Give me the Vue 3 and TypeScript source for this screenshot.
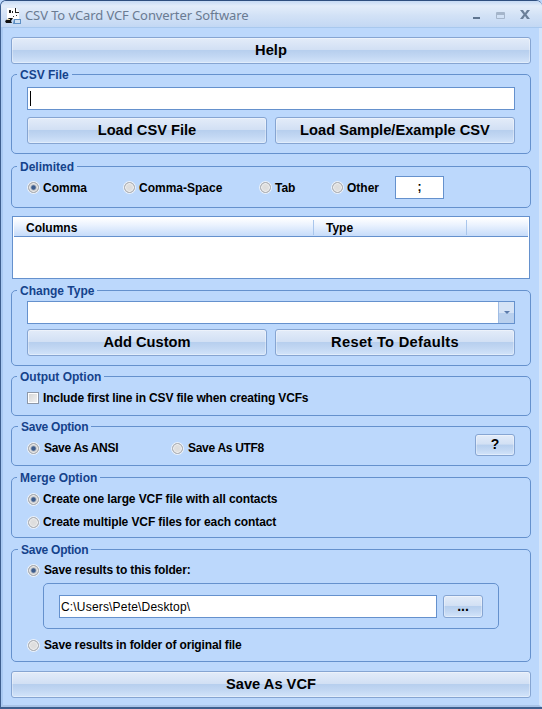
<script setup lang="ts">
const delimiters = [
  { label: 'Comma', on: true, cls: 'd1' },
  { label: 'Comma-Space', on: false, cls: 'd2' },
  { label: 'Tab', on: false, cls: 'd3' },
  { label: 'Other', on: false, cls: 'd4' },
]
</script>

<template>
  <div class="window">
    <header class="titlebar">
      <svg class="appicon" width="17" height="17" viewBox="0 0 17 17">
        <path d="M3 1h8l3 3v8H2V1z" fill="#fff" />
        <path d="M4 3h2v3H4zM7 4h1v2H7zM10 1h1v4h3v1h-4z" fill="#222" />
        <path d="M8 9h1v1H8zM11 8h1v1h-1z" fill="#333" />
        <path d="M0 14l4-3h4l-2 3 1 2H1z" fill="#111" />
        <path d="M2 12h3v1H2z" fill="#e8d9b0" />
        <path d="M9 12h7v5H8z" fill="#5d8fc4" />
        <path d="M10 13h5v3h-5z" fill="#cfe0f2" />
      </svg>
      <span class="title">CSV To vCard VCF Converter Software</span>
      <div class="controls">
        <svg width="58" height="10" viewBox="0 0 58 10">
          <path d="M0 7h7v2H0z" fill="#5f7590" />
          <path d="M23.500 2.500h8v6h-8z" fill="none" stroke="#a5b5ca" />
          <path d="M24 3h7v2h-7z" fill="#a5b5ca" />
          <path d="M47 0h3l2 3 2-3h3l-3.500 4.500 3.500 4.500h-3l-2-3-2 3h-3l3.500-4.500z" fill="#6c8099" />
        </svg>
      </div>
    </header>

    <main class="client">
      <button class="btn wide help">Help</button>

      <section class="group g-csv">
        <span class="legend">CSV File</span>
        <div class="field csvfield"><i class="caret"></i></div>
        <div class="two">
          <button class="btn big">Load CSV File</button>
          <button class="btn big">Load Sample/Example CSV</button>
        </div>
      </section>

      <section class="group g-delim">
        <span class="legend">Delimited</span>
        <div class="row">
          <label v-for="d in delimiters" :key="d.label" class="opt" :class="d.cls">
            <span class="radio" :class="{ on: d.on }"></span>{{ d.label }}
          </label>
          <div class="field semi">;</div>
        </div>
      </section>

      <section class="list">
        <div class="listhead">
          <span class="col c1">Columns</span>
          <span class="col c2">Type</span>
          <span class="col c3"></span>
        </div>
      </section>

      <section class="group g-change">
        <span class="legend">Change Type</span>
        <div class="field combo">
          <span class="arrow"><i></i></span>
        </div>
        <div class="two close">
          <button class="btn big">Add Custom</button>
          <button class="btn big wider">Reset To Defaults</button>
        </div>
      </section>

      <section class="group g-output">
        <span class="legend">Output Option</span>
        <label class="opt tight">
          <span class="check"></span>Include first line in CSV file when creating VCFs
        </label>
      </section>

      <section class="group g-save">
        <span class="legend shift">Save Option</span>
        <div class="row">
          <label class="opt s1 tx44 tighter"><span class="radio on"></span>Save As ANSI</label>
          <label class="opt s2 tx44 tighter"><span class="radio"></span>Save As UTF8</label>
          <button class="btn q">?</button>
        </div>
      </section>

      <section class="group g-merge">
        <span class="legend">Merge Option</span>
        <label class="opt slim"><span class="radio on"></span>Create one large VCF file with all contacts</label>
        <label class="opt slim"><span class="radio"></span>Create multiple VCF files for each contact</label>
      </section>

      <section class="group g-folder">
        <span class="legend shift">Save Option</span>
        <label class="opt tx44 tight"><span class="radio on"></span>Save results to this folder:</label>
        <div class="inner">
          <div class="field path">C:\Users\Pete\Desktop\</div>
          <button class="btn dots">...</button>
        </div>
        <label class="opt tx44 tight"><span class="radio"></span>Save results in folder of original file</label>
      </section>

      <button class="btn wide saveas">Save As VCF</button>
    </main>
  </div>
</template>

<style>
html, body { margin: 0; padding: 0; background: #bcd8fc; }
</style>

<style scoped>
* { box-sizing: border-box; }
.window {
  width: 542px;
  height: 709px;
  display: flex;
  flex-direction: column;
  overflow: hidden;
  background: #bcd8fc;
  border-left: 1px solid #3e5f8f;
  border-bottom: 2px solid #3e5f8f;
  border-top: 1px solid #2f4f7f;
  border-radius: 6px 6px 0 0;
  font: 700 12px "Liberation Sans", Arial, sans-serif;
  color: #000;
}
.titlebar {
  height: 27px;
  flex: none;
  display: flex;
  align-items: center;
  padding-left: 4px;
  background: linear-gradient(#c6daf4 0, #e3edfa 5px, #d3e2f6 14px, #c3d8f4 26px);
  border-bottom: 1px solid #a8c8ee;
}
.appicon { flex: none; margin-top: 2px; }
.title {
  margin-left: 3px;
  margin-top: 2px;
  font: 400 13px "Noto Sans", sans-serif;
  letter-spacing: -0.1px;
  color: #6a7b92;
  white-space: nowrap;
}
.controls { margin-left: auto; margin-right: 11px; align-self: flex-start; margin-top: 9px; height: 10px; }
.controls svg { display: block; }

.client {
  flex: 1;
  display: flex;
  flex-direction: column;
  padding: 9px 8px 0 8px;
  border-left: 2px solid #a9c9f2;
  border-right: 3px solid #d4e5fb;
  border-bottom: 2px solid #a9c4e8;
}

.btn {
  display: block;
  padding: 0 0 2px;
  margin: 0;
  font: 700 14.67px "Liberation Sans", Arial, sans-serif;
  color: #000;
  height: 27px;
  border: 1px solid #86a5d2;
  border-radius: 3px;
  background: linear-gradient(#e3ecf9 0, #d2e0f4 46%, #b7cfee 50%, #c3d8f3 75%, #d3e4fa 100%);
  box-shadow: inset 0 0 0 1px rgba(255, 255, 255, 0.35);
}
.wide { width: 520px; flex: none; }
.big { width: 240px; }
.wider { letter-spacing: 0.3px; }
.two { display: flex; gap: 8px; margin-top: 7px; }
.two.close { margin-top: 5px; }

.group {
  position: relative;
  width: 520px;
  flex: none;
  border: 1px solid #6591cd;
  border-radius: 5px;
  padding: 12px 15px 0;
}
.legend {
  position: absolute;
  top: -7px;
  left: 5px;
  padding: 0 3px;
  background: #bcd8fc;
  color: #15428b;
  line-height: 15px;
  white-space: nowrap;
}
.legend.shift { left: 6px; letter-spacing: -0.25px; }

.g-csv { margin-top: 10px; height: 80px; }
.g-delim { margin-top: 12px; height: 42px; padding-top: 9px; }
.g-change { margin-top: 11px; height: 76px; padding-top: 10px; }
.g-output { margin-top: 10px; height: 40px; padding-top: 14px; }
.g-save { margin-top: 10px; height: 40px; padding-top: 10px; }
.g-merge { margin-top: 11px; height: 61px; padding-top: 14px; display: flex; flex-direction: column; gap: 9px; }
.g-folder { margin-top: 11px; height: 113px; padding-top: 13px; }
.saveas { margin-top: 9px; }

.field {
  background: #fff;
  border: 1px solid #6591cd;
}
.csvfield { height: 23px; width: 488px; display: flex; align-items: center; padding-left: 2px; }
.caret { width: 1px; height: 15px; background: #000; display: block; }
.semi {
  width: 49px;
  height: 23px;
  font-size: 12px;
  text-align: center;
  line-height: 21px;
  flex: none;
}

.row { display: flex; align-items: center; }
.g-save .row { height: 22px; }
.opt {
  display: flex;
  align-items: center;
  height: 14px;
  white-space: nowrap;
  flex: none;
}
.tight { letter-spacing: -0.15px; }
.tighter { letter-spacing: -0.3px; }
.slim { letter-spacing: -0.1px; }
.radio {
  width: 13px;
  height: 13px;
  margin-right: 3px;
  flex: none;
  border-radius: 50%;
  background: radial-gradient(circle at 50% 50%, #dcdcdc 0, #e0e0e0 3px, #eeeeee 4px, #b2b6bc 4.6px, #b2b6bc 5.2px, #eef3fa 5.8px, #e4edf9 6.5px);
}
.radio.on {
  background: radial-gradient(circle at 50% 50%, #3d5c8c 0, #3d5c8c 1.7px, #a8b2c2 2.6px, #d4d4d4 3.2px, #e8e8e8 4px, #aeb2b8 4.6px, #aeb2b8 5.2px, #eef3fa 5.8px, #e4edf9 6.5px);
}
.tx44 .radio { margin-right: 4px; }
.check {
  width: 12px;
  height: 12px;
  margin-right: 4px;
  flex: none;
  border: 1px solid #8e98a8;
  background: linear-gradient(135deg, #d4d4d4, #f4f4f4);
  box-shadow: inset 0 0 0 1px #fff;
}
.d1 { width: 96px; }
.d2 { width: 136px; }
.d3 { width: 72px; }
.d4 { width: 64px; }
.s1 { width: 144px; }
.s2 { width: 304px; }
.q { width: 40px; height: 22px; font-size: 14px; margin-top: -6px; flex: none; }

.list {
  width: 518px;
  margin: 8px 0 0 1px;
  height: 63px;
  flex: none;
  background: #fff;
  border: 1px solid #6591cd;
  padding: 1px 1px 0;
}
.listhead {
  height: 19px;
  display: flex;
  background: linear-gradient(#fff 0, #eaf2fe 40%, #c6dcfa 100%);
  border-bottom: 1px solid #6591cd;
}
.col {
  display: block;
  height: 15px;
  margin-top: 2px;
  line-height: 16px;
  border-right: 1px solid #a9c6ec;
  flex: none;
}
.c1 { width: 300px; padding-left: 12px; }
.c2 { width: 153px; padding-left: 12px; }
.c3 { border-right: none; }

.combo { height: 23px; width: 488px; position: relative; }
.arrow {
  position: absolute;
  right: 0;
  top: 0;
  bottom: 0;
  width: 16px;
  border-left: 1px solid #9fbce4;
  background: linear-gradient(#d5e3f6 50%, #b9d0ee 50%);
  display: flex;
  justify-content: center;
}
.arrow i {
  display: block;
  margin-top: 9px;
  width: 0;
  height: 0;
  border-left: 3px solid transparent;
  border-right: 3px solid transparent;
  border-top: 3px solid #5b7bab;
}

.inner {
  width: 456px;
  height: 46px;
  margin: 6px 0 9px 16px;
  border: 1px solid #6591cd;
  border-radius: 5px;
  display: flex;
  align-items: center;
  padding-left: 15px;
  gap: 6px;
}
.path {
  width: 378px;
  height: 23px;
  padding-left: 1px;
  line-height: 22px;
  font-weight: 400;
  font-size: 12px;
  letter-spacing: 0.18px;
  color: #000;
  white-space: nowrap;
}
.dots { width: 40px; height: 23px; font-size: 14px; padding: 0; }
</style>
